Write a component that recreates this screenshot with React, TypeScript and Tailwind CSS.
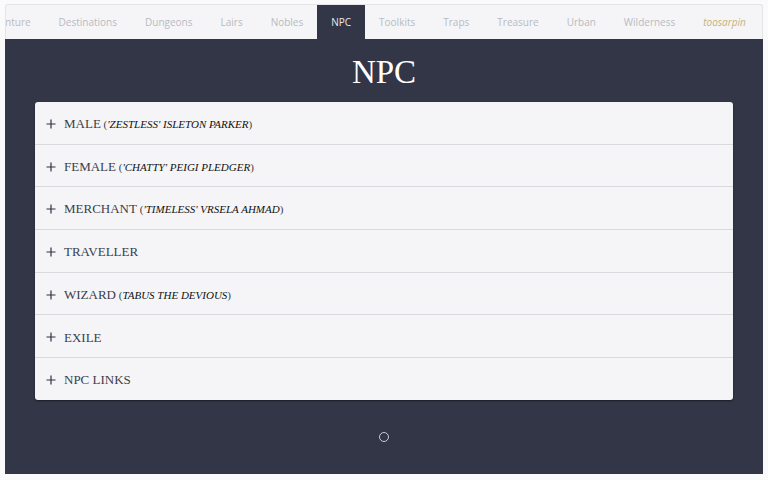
import React from "react"

const tabs = [
  "Adventure",
  "Destinations",
  "Dungeons",
  "Lairs",
  "Nobles",
  "NPC",
  "Toolkits",
  "Traps",
  "Treasure",
  "Urban",
  "Wilderness",
]

const rows: { label: string; name?: string }[] = [
  { label: "Male", name: "'Zestless' Isleton Parker" },
  { label: "Female", name: "'Chatty' Peigi Pledger" },
  { label: "Merchant", name: "'Timeless' Vrsela Ahmad" },
  { label: "Traveller" },
  { label: "Wizard", name: "Tabus the Devious" },
  { label: "Exile" },
  { label: "NPC Links" },
]

function Plus() {
  return (
    <svg width="10" height="10" viewBox="0 0 10 10" className="shrink-0">
      <path d="M5 0.5v9M0.5 5h9" stroke="#2f3340" strokeWidth="1.2" fill="none" />
    </svg>
  )
}

export default function App() {
  return (
    <div className="min-h-[480px] bg-[#fafafb] px-[5px] pt-[4px]">
      <nav className="flex h-[35px] overflow-hidden rounded-t-[3px] border border-b-0 border-[#e3e3e8] bg-[#f5f5f7] font-['Open_Sans',sans-serif] text-[10px]">
        <div className="-ml-[38px] flex shrink-0">
          {tabs.map((t) =>
            t === "NPC" ? (
              <span key={t} className="flex items-center bg-[#323646] px-[14px] text-[#e6e7ec]">
                {t}
              </span>
            ) : (
              <span key={t} className="flex items-center px-[14px] text-[#b9bac2]">
                {t}
              </span>
            )
          )}
          <span className="flex items-center px-[14px] italic text-[#c5b07c]">toosarpin</span>
        </div>
      </nav>

      <main className="flex h-[435px] flex-col items-center bg-[#323646]">
        <h1 className="mt-[17px] mb-[13px] font-['Liberation_Serif',serif] text-[33px] leading-[33px] text-white">
          NPC
        </h1>

        <div className="w-[698px] overflow-hidden rounded-[3px] bg-[#f5f5f7] shadow-[0_1px_2px_rgba(0,0,0,0.45)]">
          {rows.map((r, i) => (
            <div
              key={r.label}
              className={
                i < rows.length - 1
                  ? "flex h-[42.7px] items-center gap-[8px] border-b border-[#d9d9de] pl-[11px] pt-[2px]"
                  : "flex h-[41.7px] items-center gap-[8px] pl-[11px] pt-[2px]"
              }
            >
              <Plus />
              <span className="font-['Liberation_Serif',serif] text-[13px] uppercase text-[#3a3e4c]">
                {r.label}
                {r.name && (
                  <span className="text-[11px]">
                    {" "}(<em className="text-[#111]">{r.name}</em>)
                  </span>
                )}
              </span>
            </div>
          ))}
        </div>

        <div className="mt-[32px] h-[10px] w-[10px] rounded-full border border-[#c9cad3]" />
      </main>
    </div>
  )
}
